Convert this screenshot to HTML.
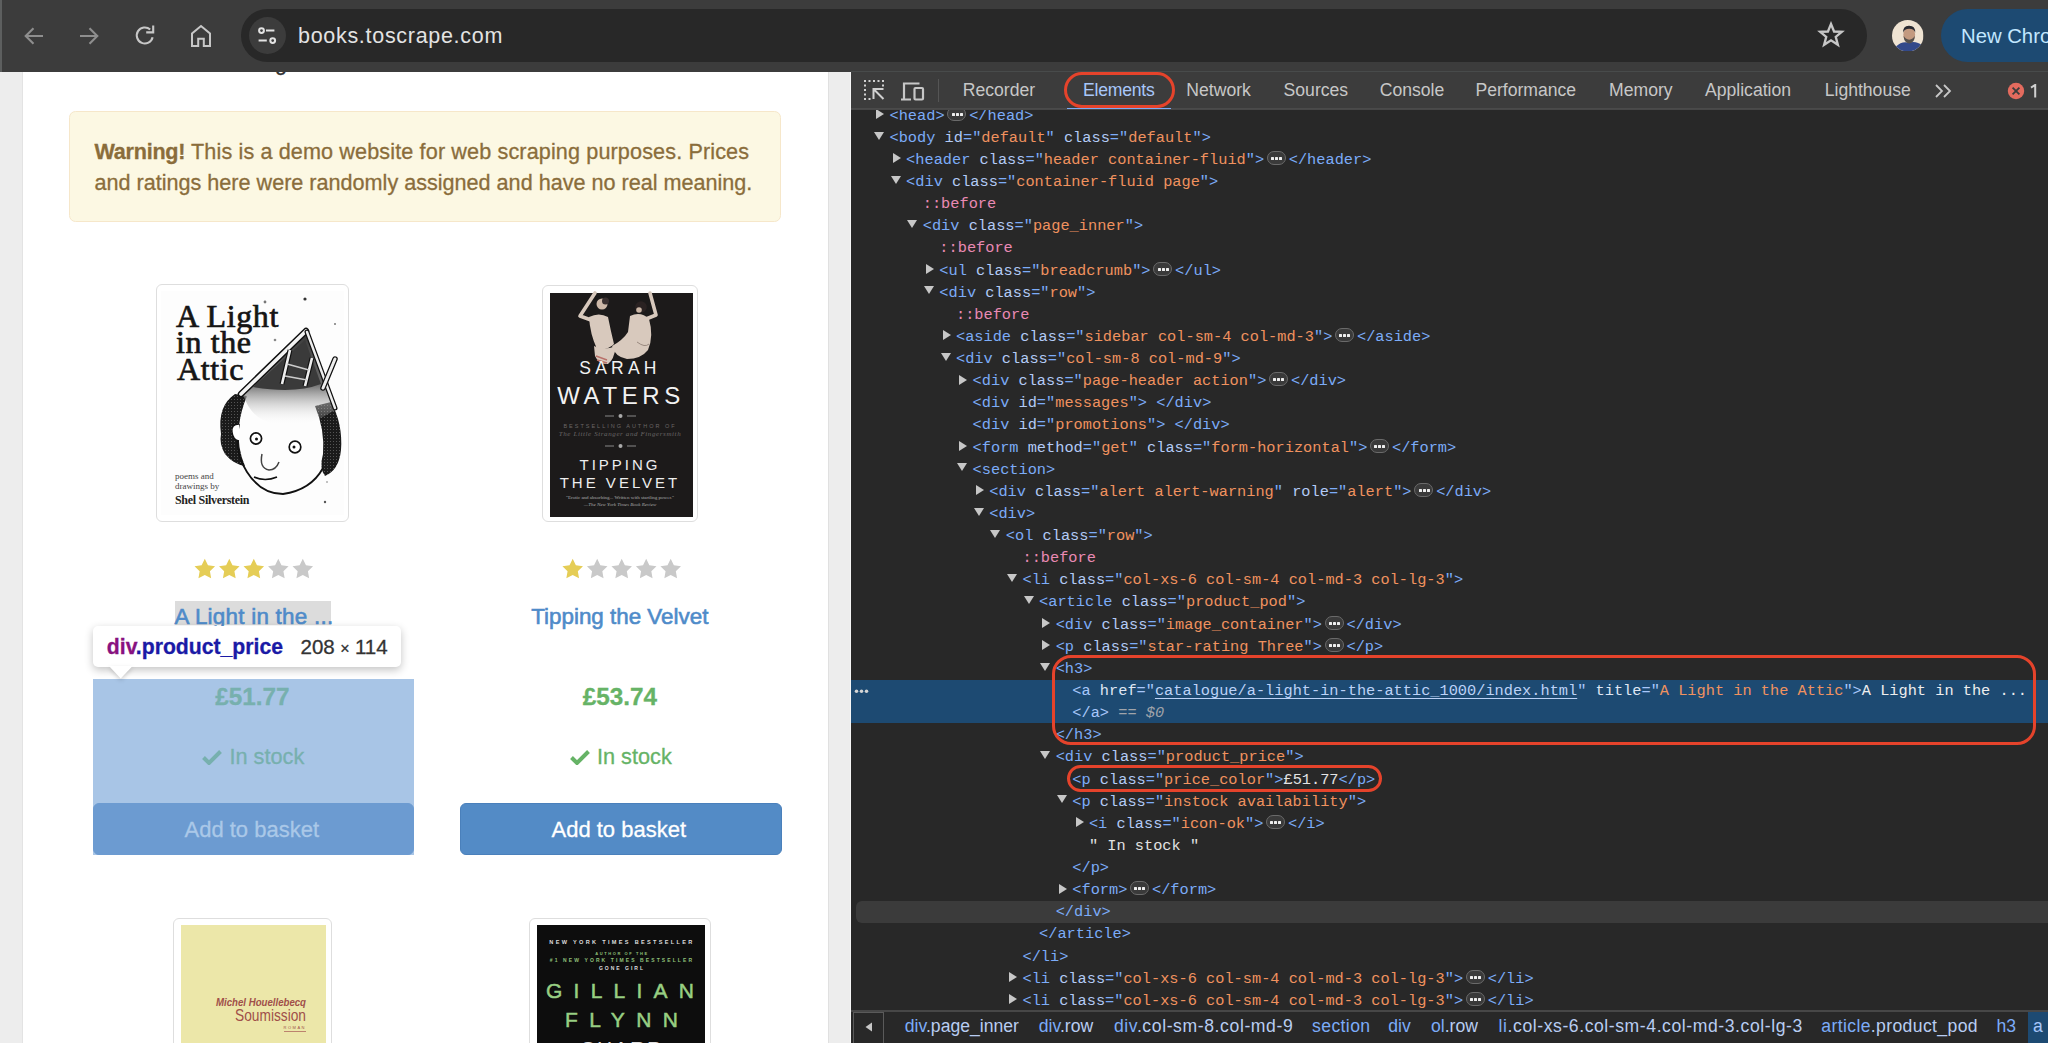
<!DOCTYPE html>
<html><head><meta charset="utf-8">
<style>
html,body{margin:0;padding:0}
body{width:2048px;height:1043px;overflow:hidden;position:relative;background:#3c3c3c;font-family:"Liberation Sans",sans-serif}
.abs{position:absolute}
/* browser toolbar */
#chrome{position:absolute;left:0;top:0;width:2048px;height:72px;background:#3c3c3c}
#pill{position:absolute;left:241px;top:9.3px;width:1626px;height:52.5px;border-radius:26.25px;background:#282828}
#url{position:absolute;left:298px;top:25.6px;font-size:21.5px;line-height:21.5px;letter-spacing:0.7px;color:#e3e3e3;white-space:nowrap}
#newchrome{position:absolute;left:1941px;top:9px;width:200px;height:53px;border-radius:26.5px;background:#1d4a72}
#newchrome span{position:absolute;left:20px;top:17px;font-size:20.3px;line-height:20px;color:#c2e7ff;white-space:nowrap}
/* page */
#page{position:absolute;left:0;top:72px;width:851px;height:971px;background:#ededed;overflow:hidden}
#white{position:absolute;left:23px;top:0;width:805px;height:971px;background:#fff}
.t{position:absolute;white-space:nowrap;line-height:1;-webkit-text-stroke:0.3px currentColor}
.alert{position:absolute;left:69.4px;top:39px;width:709.6px;height:109px;background:#fcf8e3;border:1px solid #f6e7ca;border-radius:6.5px}
.thumb{position:absolute;border:1.5px solid #dedede;border-radius:6px;background:#fff;overflow:hidden}
.btn{position:absolute;height:52px;border-radius:6px;background:#538bc6;border:1px solid #4a80bb;box-sizing:border-box}
/* devtools */
#dt{position:absolute;left:851px;top:71px;width:1197px;height:972px;background:#282828;overflow:hidden}
#dtbar{position:absolute;left:0;top:0;width:1197px;height:38px;background:#3c3c3c;border-top:1px solid #484b4b;box-sizing:border-box;border-bottom:1px solid #4a4a4a}
.tab{position:absolute;top:9.2px;font-size:17.6px;line-height:18px;white-space:nowrap}
#tree{position:absolute;left:0;top:38px;width:1197px;height:901px;overflow:hidden;background:#282828}
.row{position:absolute;white-space:pre;font-family:"Liberation Mono",monospace;font-size:15.3px;line-height:22.13px;height:22.13px}
.tro{position:absolute;width:0;height:0;border-left:5.6px solid transparent;border-right:5.6px solid transparent;border-top:8px solid #c7c7c7}
.trc{position:absolute;width:0;height:0;border-top:5.3px solid transparent;border-bottom:5.3px solid transparent;border-left:8px solid #c7c7c7}
.bd{display:inline-block;position:relative;width:19px;height:14px;box-sizing:border-box;border:1px solid #6a6a6a;border-radius:7px;background:#3a3a3a;margin:0 2.8px;vertical-align:-1px}
.bd i{position:absolute;top:5px;width:3px;height:3px;background:#eee;border-radius:0.5px}
.bd i:nth-child(1){left:3.2px}.bd i:nth-child(2){left:7.2px}.bd i:nth-child(3){left:11.2px}
#crumbbar{position:absolute;left:0;top:939px;width:1197px;height:33px;background:#282828;border-top:2px solid #474747;box-sizing:border-box}
.crumb{position:absolute;top:5.3px;font-size:17.6px;line-height:18px;white-space:nowrap}
.redpill{position:absolute;border:3px solid #e5432b;box-sizing:border-box}
</style></head>
<body>

<div id="chrome">
  <div class="abs" style="left:0;top:0;width:2px;height:72px;background:#5d5f5f"></div>
  <!-- back -->
  <svg class="abs" style="left:22px;top:24px" width="24" height="24" viewBox="0 0 24 24"><path d="M21 12H4.5M11.5 4.2L3.7 12l7.8 7.8" fill="none" stroke="#8e8e8e" stroke-width="2.1"/></svg>
  <!-- forward -->
  <svg class="abs" style="left:77px;top:24px" width="24" height="24" viewBox="0 0 24 24"><path d="M3 12h16.5M12.5 4.2l7.8 7.8-7.8 7.8" fill="none" stroke="#8e8e8e" stroke-width="2.1"/></svg>
  <!-- reload -->
  <svg class="abs" style="left:133px;top:24px" width="24" height="24" viewBox="0 0 24 24"><path d="M19.6 13.2A8 8 0 1 1 17.2 5.6" fill="none" stroke="#c7c7c7" stroke-width="2.1"/><path d="M13.2 8.4H20.2V1.6" fill="none" stroke="#c7c7c7" stroke-width="2.1"/></svg>
  <!-- home -->
  <svg class="abs" style="left:189px;top:23px" width="24" height="26" viewBox="0 0 24 26"><path d="M3 23V10.4L12 3l9 7.4V23h-6.2v-7.2H9.2V23z" fill="none" stroke="#c7c7c7" stroke-width="2"/></svg>
  <div id="pill"></div>
  <div class="abs" style="left:248.5px;top:17px;width:37px;height:37px;border-radius:50%;background:#3c3c3c"></div>
  <svg class="abs" style="left:255px;top:23px" width="25" height="25" viewBox="0 0 25 25"><circle cx="6.5" cy="7.6" r="2.4" fill="none" stroke="#e3e3e3" stroke-width="2"/><path d="M11 7.6h8.4M3.6 17.6h8.2" stroke="#e3e3e3" stroke-width="2"/><circle cx="17.7" cy="17.6" r="2.4" fill="none" stroke="#e3e3e3" stroke-width="2"/></svg>
  <div id="url">books.toscrape.com</div>
  <!-- star -->
  <svg class="abs" style="left:1816.5px;top:21px" width="28" height="27" viewBox="0 0 30 29"><polygon points="15,3.2 18.3,11.3 26.6,11.6 20.1,17 22.4,25.6 15,20.7 7.6,25.6 9.9,17 3.4,11.6 11.7,11.3" fill="none" stroke="#c7c7c7" stroke-width="2.5" stroke-linejoin="miter"/></svg>
  <!-- avatar -->
  <svg class="abs" style="left:1892px;top:19.5px" width="31.5" height="31.5" viewBox="0 0 32 32">
    <defs><clipPath id="av"><circle cx="16" cy="16" r="16"/></clipPath></defs>
    <g clip-path="url(#av)">
      <rect width="32" height="32" fill="#efe3d2"/>
      <path d="M2 32 L4 27 Q10 21 17 23 Q25 21 31 26 L32 32z" fill="#33498a"/>
      <ellipse cx="17.5" cy="15" rx="6" ry="7.6" fill="#c39a80"/>
      <path d="M11.3 13 Q11 5.5 17.5 5.8 Q24 6 23.6 13 Q22.5 9 17.5 9 Q12.5 9 11.3 13z" fill="#2a2a30"/>
      <path d="M11.8 16 Q12 23.5 17.5 23.8 Q23 23.5 23.2 16 Q21.5 19.5 17.5 20 Q13.5 19.5 11.8 16z" fill="#55504c"/>
    </g>
  </svg>
  <div id="newchrome"><span>New Chrome</span></div>
</div>

<div id="page">
  <div id="white"></div>
  <div class="abs" style="left:22px;top:0;width:1px;height:971px;background:#e3e3e3"></div>
  <div class="abs" style="left:828px;top:0;width:1px;height:971px;background:#e0e0e0"></div>
  <div class="abs" style="left:850px;top:0;width:1px;height:971px;background:#f6f6f6"></div>
  <div class="t" style="left:71px;top:-19.6px;font-size:21.6px;color:#333"><b>1000</b> results - showing <b>1</b> to <b>20</b>.</div>

  <div class="alert"></div>
  <div class="t" style="left:94.5px;top:69.2px;font-size:21.6px;color:#8a6d3b"><b style="letter-spacing:-0.25px">Warning!</b><span style="letter-spacing:0.13px"> This is a demo website for web scraping purposes. Prices</span></div>
  <div class="t" style="left:94.5px;top:100.3px;font-size:21.6px;color:#8a6d3b">and ratings here were randomly assigned and have no real meaning.</div>

  <!-- product 1 -->
  <div class="thumb" style="left:155.5px;top:212.3px;width:191.5px;height:236px">
    <svg width="195" height="238" viewBox="0 0 195 238" style="position:absolute;left:-1.5px;top:-1.5px">
      <rect x="6" y="7" width="183" height="224" fill="#fdfdfd"/>
      <text x="21" y="42.5" font-family="Liberation Serif" font-size="32" fill="#151515" stroke="#151515" stroke-width="0.7" letter-spacing="0.6">A Light</text>
      <text x="21" y="69" font-family="Liberation Serif" font-size="32" fill="#151515" stroke="#151515" stroke-width="0.7" letter-spacing="0.6">in the</text>
      <text x="22" y="95.5" font-family="Liberation Serif" font-size="32" fill="#151515" stroke="#151515" stroke-width="0.7" letter-spacing="0.6">Attic</text>
      <text x="20" y="195" font-family="Liberation Serif" font-size="9" fill="#444">poems and</text>
      <text x="20" y="204.5" font-family="Liberation Serif" font-size="9" fill="#444">drawings by</text>
      <text x="20" y="220" font-family="Liberation Serif" font-size="12" font-weight="bold" fill="#222" letter-spacing="-0.3">Shel Silverstein</text>
      <!-- head -->
      <defs>
        <linearGradient id="hatch" x1="0" y1="0" x2="0" y2="1"><stop offset="0" stop-color="#3a3a3a"/><stop offset="0.55" stop-color="#6a6a6a"/><stop offset="1" stop-color="#fff" stop-opacity="0"/></linearGradient>
        <pattern id="hair" width="3" height="3" patternUnits="userSpaceOnUse"><rect width="3" height="3" fill="#1a1a1a"/><rect x="1" y="1" width="1" height="1" fill="#555"/></pattern>
      </defs>
      <!-- hair -->
      <path d="M66 150 Q62 122 80 110 L92 112 Q86 126 84 142 Q82 164 90 182 Q78 180 70 170 Q64 160 66 150z" fill="url(#hair)"/>
      <path d="M160 122 L176 118 Q188 140 186 166 Q184 186 170 192 Q164 184 168 170 Q170 146 160 122z" fill="url(#hair)"/>
      <!-- roof interior + head top hatch -->
      <path d="M88 110 L152 49 L180 126 Q150 146 120 140 Q96 136 88 110z" fill="url(#hatch)"/>
      <path d="M98 103 L150 56 L166 100 Q140 110 98 103z" fill="#3a3a3a"/>
      <!-- face -->
      <path d="M84 140 Q78 166 92 188 Q106 210 128 210 Q156 206 168 184" fill="none" stroke="#111" stroke-width="1.8"/>
      <path d="M84 140 Q76 140 77 148 Q78 156 84 157" fill="#fff" stroke="#111" stroke-width="1.4"/>
      <!-- planks -->
      <path d="M86 110 L151 47" stroke="#111" stroke-width="6.5" stroke-linecap="round"/>
      <path d="M86 110 L151 47" stroke="#f4f4f4" stroke-width="3.6" stroke-linecap="round"/>
      <path d="M152 48 L180 124" stroke="#111" stroke-width="5" stroke-linecap="round"/>
      <path d="M152 48 L180 124" stroke="#eee" stroke-width="2.4" stroke-linecap="round"/>
      <path d="M180 75 L168 104" stroke="#111" stroke-width="5.5" stroke-linecap="round"/>
      <path d="M180 75 L168 104" stroke="#eee" stroke-width="3" stroke-linecap="round"/>
      <!-- ladder -->
      <path d="M135 66 L127 100 M157 74 L150 102" stroke="#111" stroke-width="5"/>
      <path d="M135 66 L127 100 M157 74 L150 102" stroke="#eee" stroke-width="2.6"/>
      <path d="M132 80 L154 86 M130 92 L152 96" stroke="#ccc" stroke-width="1.6"/>
      <!-- eyes -->
      <circle cx="101" cy="154.5" r="5.6" fill="#fff" stroke="#111" stroke-width="1.7"/><circle cx="101.5" cy="155" r="1.5" fill="#111"/>
      <circle cx="140" cy="163" r="5.8" fill="#fff" stroke="#111" stroke-width="1.7"/><circle cx="139" cy="163" r="1.5" fill="#111"/>
      <path d="M107 170 Q104 184 114 186 Q121 186 124 178" fill="none" stroke="#444" stroke-width="1.5"/>
      <path d="M99 193 Q110 198 122 193" fill="none" stroke="#111" stroke-width="1.7"/>
      <circle cx="110" cy="18" r="1.4" fill="#777"/><circle cx="150" cy="15" r="1.6" fill="#333"/><circle cx="120" cy="56" r="1.3" fill="#888"/><circle cx="180" cy="40" r="1" fill="#777"/><circle cx="170" cy="218" r="1.2" fill="#555"/><circle cx="172" cy="198" r="0.8" fill="#777"/>
    </svg>
  </div>
  <svg class="abs" style="left:0;top:-72px" width="851" height="1043"><polygon points="204.80,558.80 207.97,565.23 215.07,566.26 209.94,571.27 211.15,578.34 204.80,575.00 198.45,578.34 199.66,571.27 194.53,566.26 201.63,565.23" fill="#e5cd56"/><polygon points="229.30,558.80 232.47,565.23 239.57,566.26 234.44,571.27 235.65,578.34 229.30,575.00 222.95,578.34 224.16,571.27 219.03,566.26 226.13,565.23" fill="#e5cd56"/><polygon points="253.80,558.80 256.97,565.23 264.07,566.26 258.94,571.27 260.15,578.34 253.80,575.00 247.45,578.34 248.66,571.27 243.53,566.26 250.63,565.23" fill="#e5cd56"/><polygon points="278.30,558.80 281.47,565.23 288.57,566.26 283.44,571.27 284.65,578.34 278.30,575.00 271.95,578.34 273.16,571.27 268.03,566.26 275.13,565.23" fill="#c9c9c9"/><polygon points="302.80,558.80 305.97,565.23 313.07,566.26 307.94,571.27 309.15,578.34 302.80,575.00 296.45,578.34 297.66,571.27 292.53,566.26 299.63,565.23" fill="#c9c9c9"/><polygon points="572.70,558.80 575.87,565.23 582.97,566.26 577.84,571.27 579.05,578.34 572.70,575.00 566.35,578.34 567.56,571.27 562.43,566.26 569.53,565.23" fill="#e5cd56"/><polygon points="597.20,558.80 600.37,565.23 607.47,566.26 602.34,571.27 603.55,578.34 597.20,575.00 590.85,578.34 592.06,571.27 586.93,566.26 594.03,565.23" fill="#c9c9c9"/><polygon points="621.70,558.80 624.87,565.23 631.97,566.26 626.84,571.27 628.05,578.34 621.70,575.00 615.35,578.34 616.56,571.27 611.43,566.26 618.53,565.23" fill="#c9c9c9"/><polygon points="646.20,558.80 649.37,565.23 656.47,566.26 651.34,571.27 652.55,578.34 646.20,575.00 639.85,578.34 641.06,571.27 635.93,566.26 643.03,565.23" fill="#c9c9c9"/><polygon points="670.70,558.80 673.87,565.23 680.97,566.26 675.84,571.27 677.05,578.34 670.70,575.00 664.35,578.34 665.56,571.27 660.43,566.26 667.53,565.23" fill="#c9c9c9"/></svg>
  <div class="abs" style="left:175px;top:529px;width:156px;height:24px;background:#dcdcdc"></div>
  <div class="t" style="left:174.5px;top:534.1px;font-size:22.4px;letter-spacing:0.25px;color:#4f8bc9;-webkit-text-stroke:0.6px #4f8bc9">A Light in the ...</div>

  <!-- product 1 price area (highlighted) -->
  <div class="abs" style="left:93px;top:607.2px;width:321px;height:176px;background:#a8c5e6"></div>
  <div class="t" style="left:215.2px;top:612.5px;font-size:24.3px;font-weight:bold;color:#77b0ae">£51.77</div>
  <svg class="abs" style="left:202px;top:677.5px" width="20" height="15" viewBox="0 0 20 15"><path d="M1.5 7.5 L7 13 L18.5 1.5" fill="none" stroke="#77b0ae" stroke-width="4"/></svg>
  <div class="t" style="left:229.5px;top:673.8px;font-size:21.7px;color:#77b0ae">In stock</div>
  <div class="btn" style="left:93px;top:731px;width:321px;background:#6c9bd1;border-color:#6c9bd1"></div>
  <div class="t" style="left:184.5px;top:746.8px;font-size:22px;color:#aac8e8">Add to basket</div>

  <!-- tooltip -->
  <div class="abs" style="left:93px;top:553.5px;width:308px;height:41.5px;background:#fff;border-radius:5px;box-shadow:0 3px 8px rgba(0,0,0,.24)"></div>
  <svg class="abs" style="left:104px;top:594px;overflow:visible;filter:drop-shadow(0 2px 2px rgba(0,0,0,.18))" width="34" height="14"><path d="M5 0 L16.7 12.6 L28.6 0z" fill="#fff"/></svg>
  <div class="t" style="left:106.8px;top:563.5px;font-size:21.2px;font-weight:bold"><span style="color:#881280">div</span><span style="color:#1a1aa6">.product_price</span></div>
  <div class="t" style="left:300.5px;top:564.5px;font-size:20.5px;color:#333">208<span style="font-size:16px;margin:0 1px"> × </span>114</div>

  <!-- product 2 -->
  <div class="thumb" style="left:541.5px;top:212.8px;width:154.5px;height:235.5px">
    <svg width="158" height="238" viewBox="0 0 158 238" style="position:absolute;left:-1.5px;top:-1.5px">
      <rect x="9" y="9" width="143" height="224" fill="#1c1a1a"/>
      <g fill="#d8c9bd" stroke="#d8c9bd">
        <polyline points="54,9 39,32 50,36" fill="none" stroke-width="3.6" stroke-linecap="round" stroke-linejoin="round"/>
        <polyline points="109,9 115,31 105,35" fill="none" stroke-width="3.6" stroke-linecap="round" stroke-linejoin="round"/>
        <path stroke="none" d="M48 33 Q58 28 67 33 Q70 48 73 60 Q66 67 56 65 Q49 50 48 33z"/>
        <path stroke="none" d="M53 62 Q62 67 75 62 Q73 76 67 80 Q58 81 54 72z"/>
        <path stroke="none" d="M89 32 Q100 27 108 35 Q113 52 107 66 Q100 75 86 75 Q74 73 71 62 Q82 56 87 48 Q88 40 89 32z"/>
      </g>
      <circle cx="61" cy="20" r="5.5" fill="#cdb8a8"/><circle cx="64.5" cy="17" r="3.5" fill="#3a3030"/>
      <circle cx="100" cy="23" r="5.8" fill="#2a2222"/><circle cx="98" cy="26" r="2.8" fill="#c9b4a4"/>
      <path d="M55 72 L66 76 M56 76 L66 79" stroke="#b9716a" stroke-width="1.4"/>
      <path d="M96 58 Q104 64 108 60" stroke="#9a8a80" stroke-width="1" fill="none"/>
      <text x="79" y="90" text-anchor="middle" font-family="Liberation Sans" font-size="17.5" fill="#f2f2f2" letter-spacing="4.2">SARAH</text>
      <text x="80" y="120" text-anchor="middle" font-family="Liberation Sans" font-size="24" fill="#f2f2f2" letter-spacing="4.6">WATERS</text>
      <path d="M64 132h9M86 132h9" stroke="#888" stroke-width="1"/><circle cx="79.5" cy="132" r="2" fill="#aaa"/>
      <text x="79" y="144" text-anchor="middle" font-family="Liberation Sans" font-size="5.5" fill="#6a6666" letter-spacing="2">BESTSELLING AUTHOR OF</text>
      <text x="79" y="152" text-anchor="middle" font-family="Liberation Serif" font-style="italic" font-size="7" fill="#6a6666" letter-spacing="0.6">The Little Stranger and Fingersmith</text>
      <path d="M64 162h9M86 162h9" stroke="#888" stroke-width="1"/><circle cx="79.5" cy="162" r="2" fill="#aaa"/>
      <text x="79" y="186" text-anchor="middle" font-family="Liberation Sans" font-size="15" fill="#eeeeee" letter-spacing="3">TIPPING</text>
      <text x="79" y="204" text-anchor="middle" font-family="Liberation Sans" font-size="15" fill="#eeeeee" letter-spacing="3">THE VELVET</text>
      <text x="79" y="215" text-anchor="middle" font-family="Liberation Serif" font-size="5" fill="#aaa">"Erotic and absorbing... Written with startling power."</text>
      <text x="79" y="222" text-anchor="middle" font-family="Liberation Serif" font-style="italic" font-size="5" fill="#aaa">—The New York Times Book Review</text>
    </svg>
  </div>
  <div class="t" style="left:531.2px;top:534.4px;font-size:22.4px;color:#4f8bc9;-webkit-text-stroke:0.6px #4f8bc9">Tipping the Velvet</div>
  <div class="t" style="left:582.8px;top:613px;font-size:24.3px;font-weight:bold;color:#66b366">£53.74</div>
  <svg class="abs" style="left:569.5px;top:677.5px" width="20" height="15" viewBox="0 0 20 15"><path d="M1.5 7.5 L7 13 L18.5 1.5" fill="none" stroke="#66b366" stroke-width="4"/></svg>
  <div class="t" style="left:597px;top:673.8px;font-size:21.7px;color:#66b366">In stock</div>
  <div class="btn" style="left:460px;top:731px;width:322px"></div>
  <div class="t" style="left:551.5px;top:746.8px;font-size:22px;color:#fff">Add to basket</div>

  <!-- row 2 -->
  <div class="thumb" style="left:173.3px;top:845.5px;width:156.5px;height:200px">
    <div class="abs" style="left:6.5px;top:6px;width:145px;height:200px;background:#ece7a9"></div>
    <svg class="abs" style="left:0;top:0" width="160" height="140">
      <text x="132" y="87" text-anchor="end" font-family="Liberation Sans" font-style="italic" font-weight="bold" font-size="10.5" fill="#a0504a" textLength="90" lengthAdjust="spacingAndGlyphs">Michel Houellebecq</text>
      <text x="132" y="101.8" text-anchor="end" font-family="Liberation Sans" font-size="16.5" fill="#a0504a" textLength="71" lengthAdjust="spacingAndGlyphs">Soumission</text>
      <text x="132" y="110" text-anchor="end" font-family="Liberation Sans" font-size="4" fill="#a0504a" letter-spacing="1.5">ROMAN</text>
      <path d="M110 112.5h22" stroke="#b06a60" stroke-width="0.8"/>
    </svg>
  </div>
  <div class="thumb" style="left:529.3px;top:845.5px;width:180px;height:200px">
    <div class="abs" style="left:6.5px;top:6px;width:168px;height:200px;background:#0d0d0d"></div>
    <svg class="abs" style="left:0;top:0" width="183" height="160">
      <text x="92" y="25" text-anchor="middle" font-family="Liberation Sans" font-weight="bold" font-size="5.6" fill="#ddd" letter-spacing="2.3">NEW YORK TIMES BESTSELLER</text>
      <text x="92" y="36" text-anchor="middle" font-family="Liberation Sans" font-weight="bold" font-size="4" fill="#8fc07a" letter-spacing="1.6">AUTHOR OF THE</text>
      <text x="92" y="42.5" text-anchor="middle" font-family="Liberation Sans" font-weight="bold" font-size="5" fill="#8fc07a" letter-spacing="2.1">#1 NEW YORK TIMES BESTSELLER</text>
      <text x="92" y="50.5" text-anchor="middle" font-family="Liberation Sans" font-weight="bold" font-size="5" fill="#ddd" letter-spacing="2">GONE GIRL</text>
      <text x="16" y="78.6" font-family="Liberation Sans" font-size="21" fill="#98cf83" stroke="#98cf83" stroke-width="0.5" textLength="148" lengthAdjust="spacing">GILLIAN</text>
      <text x="35" y="108.3" font-family="Liberation Sans" font-size="21" fill="#98cf83" stroke="#98cf83" stroke-width="0.5" textLength="113" lengthAdjust="spacing">FLYNN</text>
      <text x="51" y="136.8" font-family="Liberation Sans" font-size="21" fill="#e0e0e0" textLength="80" lengthAdjust="spacing">SHARP</text>
    </svg>
  </div>
</div>

<div id="dt">
  <div id="dtbar">
    <svg class="abs" style="left:12px;top:7px" width="22" height="22" viewBox="0 0 22 22">
      <g fill="#d0d0d0"><rect x="1" y="1" width="2" height="2"/><rect x="5.5" y="1" width="2" height="2"/><rect x="10" y="1" width="2" height="2"/><rect x="14.5" y="1" width="2" height="2"/><rect x="19" y="1" width="2" height="2"/>
      <rect x="1" y="5.5" width="2" height="2"/><rect x="19" y="5.5" width="2" height="2"/><rect x="1" y="10" width="2" height="2"/><rect x="1" y="14.5" width="2" height="2"/><rect x="1" y="19" width="2" height="2"/><rect x="5.5" y="19" width="2" height="2"/></g>
      <path d="M10.5 20V10h10M11 10.5 L20.5 20" fill="none" stroke="#d0d0d0" stroke-width="2"/>
    </svg>
    <svg class="abs" style="left:49px;top:9px" width="26" height="20" viewBox="0 0 26 20"><path d="M4 18V2.5h15.5M1 18.5h10" fill="none" stroke="#c7c7c7" stroke-width="2.2"/><rect x="14.5" y="7" width="8.5" height="11.5" rx="1" fill="none" stroke="#c7c7c7" stroke-width="2.2"/></svg>
    <div class="abs" style="left:87px;top:7px;width:1px;height:23px;background:#555"></div>
    <div class="tab" style="left:111.8px;color:#c7c7c7">Recorder</div>
<div class="tab" style="left:231.9px;color:#a8c7fa;letter-spacing:-0.2px">Elements</div>
<div class="tab" style="left:335.3px;color:#c7c7c7">Network</div>
<div class="tab" style="left:432.6px;color:#c7c7c7">Sources</div>
<div class="tab" style="left:528.7px;color:#c7c7c7">Console</div>
<div class="tab" style="left:624.4px;color:#c7c7c7">Performance</div>
<div class="tab" style="left:758.1px;color:#c7c7c7">Memory</div>
<div class="tab" style="left:854.0px;color:#c7c7c7">Application</div>
<div class="tab" style="left:973.7px;color:#c7c7c7">Lighthouse</div>
    <div class="abs" style="left:215.7px;top:35.9px;width:104.8px;height:2px;background:#7cacf8"></div>
    <svg class="abs" style="left:1082.5px;top:10.5px" width="20" height="16" viewBox="0 0 20 16"><path d="M2 2l6 6-6 6M10 2l6 6-6 6" fill="none" stroke="#c7c7c7" stroke-width="1.8"/></svg>
    <svg class="abs" style="left:1156px;top:9.6px" width="18" height="18" viewBox="0 0 18 18"><circle cx="9" cy="9" r="8.2" fill="#e46b5e"/><path d="M5.6 5.6l6.8 6.8M12.4 5.6l-6.8 6.8" stroke="#3c3c3c" stroke-width="1.8"/></svg>
    <svg class="abs" style="left:1178px;top:12px" width="10" height="15" viewBox="0 0 10 15"><path d="M2 3.6 L6.2 0.9 V13.5" fill="none" stroke="#d0d0d0" stroke-width="2"/></svg>
  </div>
  <div id="tree">
<div class="trc" style="left:25.20px;top:0.10px"></div>
<div class="row" style="left:38.50px;top:-4.40px"><span style="color:#7cacf8">&lt;head</span><span style="color:#7cacf8">&gt;</span><span class="bd"><i></i><i></i><i></i></span><span style="color:#7cacf8">&lt;/head</span><span style="color:#7cacf8">&gt;</span></div>
<div class="tro" style="left:23.10px;top:22.53px"></div>
<div class="row" style="left:38.50px;top:17.73px"><span style="color:#7cacf8">&lt;body</span><span style="color:#b3cbf6"> id</span><span style="color:#7cacf8">=&quot;</span><span style="color:#f0925f">default</span><span style="color:#7cacf8">&quot;</span><span style="color:#b3cbf6"> class</span><span style="color:#7cacf8">=&quot;</span><span style="color:#f0925f">default</span><span style="color:#7cacf8">&quot;</span><span style="color:#7cacf8">&gt;</span></div>
<div class="trc" style="left:41.82px;top:44.36px"></div>
<div class="row" style="left:55.12px;top:39.86px"><span style="color:#7cacf8">&lt;header</span><span style="color:#b3cbf6"> class</span><span style="color:#7cacf8">=&quot;</span><span style="color:#f0925f">header container-fluid</span><span style="color:#7cacf8">&quot;</span><span style="color:#7cacf8">&gt;</span><span class="bd"><i></i><i></i><i></i></span><span style="color:#7cacf8">&lt;/header</span><span style="color:#7cacf8">&gt;</span></div>
<div class="tro" style="left:39.72px;top:66.79px"></div>
<div class="row" style="left:55.12px;top:61.99px"><span style="color:#7cacf8">&lt;div</span><span style="color:#b3cbf6"> class</span><span style="color:#7cacf8">=&quot;</span><span style="color:#f0925f">container-fluid page</span><span style="color:#7cacf8">&quot;</span><span style="color:#7cacf8">&gt;</span></div>
<div class="row" style="left:71.74px;top:84.12px"><span style="color:#ea8ab4">::before</span></div>
<div class="tro" style="left:56.34px;top:111.05px"></div>
<div class="row" style="left:71.74px;top:106.25px"><span style="color:#7cacf8">&lt;div</span><span style="color:#b3cbf6"> class</span><span style="color:#7cacf8">=&quot;</span><span style="color:#f0925f">page_inner</span><span style="color:#7cacf8">&quot;</span><span style="color:#7cacf8">&gt;</span></div>
<div class="row" style="left:88.36px;top:128.38px"><span style="color:#ea8ab4">::before</span></div>
<div class="trc" style="left:75.06px;top:155.01px"></div>
<div class="row" style="left:88.36px;top:150.51px"><span style="color:#7cacf8">&lt;ul</span><span style="color:#b3cbf6"> class</span><span style="color:#7cacf8">=&quot;</span><span style="color:#f0925f">breadcrumb</span><span style="color:#7cacf8">&quot;</span><span style="color:#7cacf8">&gt;</span><span class="bd"><i></i><i></i><i></i></span><span style="color:#7cacf8">&lt;/ul</span><span style="color:#7cacf8">&gt;</span></div>
<div class="tro" style="left:72.96px;top:177.44px"></div>
<div class="row" style="left:88.36px;top:172.64px"><span style="color:#7cacf8">&lt;div</span><span style="color:#b3cbf6"> class</span><span style="color:#7cacf8">=&quot;</span><span style="color:#f0925f">row</span><span style="color:#7cacf8">&quot;</span><span style="color:#7cacf8">&gt;</span></div>
<div class="row" style="left:104.98px;top:194.77px"><span style="color:#ea8ab4">::before</span></div>
<div class="trc" style="left:91.68px;top:221.40px"></div>
<div class="row" style="left:104.98px;top:216.90px"><span style="color:#7cacf8">&lt;aside</span><span style="color:#b3cbf6"> class</span><span style="color:#7cacf8">=&quot;</span><span style="color:#f0925f">sidebar col-sm-4 col-md-3</span><span style="color:#7cacf8">&quot;</span><span style="color:#7cacf8">&gt;</span><span class="bd"><i></i><i></i><i></i></span><span style="color:#7cacf8">&lt;/aside</span><span style="color:#7cacf8">&gt;</span></div>
<div class="tro" style="left:89.58px;top:243.83px"></div>
<div class="row" style="left:104.98px;top:239.03px"><span style="color:#7cacf8">&lt;div</span><span style="color:#b3cbf6"> class</span><span style="color:#7cacf8">=&quot;</span><span style="color:#f0925f">col-sm-8 col-md-9</span><span style="color:#7cacf8">&quot;</span><span style="color:#7cacf8">&gt;</span></div>
<div class="trc" style="left:108.30px;top:265.66px"></div>
<div class="row" style="left:121.60px;top:261.16px"><span style="color:#7cacf8">&lt;div</span><span style="color:#b3cbf6"> class</span><span style="color:#7cacf8">=&quot;</span><span style="color:#f0925f">page-header action</span><span style="color:#7cacf8">&quot;</span><span style="color:#7cacf8">&gt;</span><span class="bd"><i></i><i></i><i></i></span><span style="color:#7cacf8">&lt;/div</span><span style="color:#7cacf8">&gt;</span></div>
<div class="row" style="left:121.60px;top:283.29px"><span style="color:#7cacf8">&lt;div</span><span style="color:#b3cbf6"> id</span><span style="color:#7cacf8">=&quot;</span><span style="color:#f0925f">messages</span><span style="color:#7cacf8">&quot;</span><span style="color:#7cacf8">&gt;</span><span style="color:#e3e3e3"> </span><span style="color:#7cacf8">&lt;/div</span><span style="color:#7cacf8">&gt;</span></div>
<div class="row" style="left:121.60px;top:305.42px"><span style="color:#7cacf8">&lt;div</span><span style="color:#b3cbf6"> id</span><span style="color:#7cacf8">=&quot;</span><span style="color:#f0925f">promotions</span><span style="color:#7cacf8">&quot;</span><span style="color:#7cacf8">&gt;</span><span style="color:#e3e3e3"> </span><span style="color:#7cacf8">&lt;/div</span><span style="color:#7cacf8">&gt;</span></div>
<div class="trc" style="left:108.30px;top:332.05px"></div>
<div class="row" style="left:121.60px;top:327.55px"><span style="color:#7cacf8">&lt;form</span><span style="color:#b3cbf6"> method</span><span style="color:#7cacf8">=&quot;</span><span style="color:#f0925f">get</span><span style="color:#7cacf8">&quot;</span><span style="color:#b3cbf6"> class</span><span style="color:#7cacf8">=&quot;</span><span style="color:#f0925f">form-horizontal</span><span style="color:#7cacf8">&quot;</span><span style="color:#7cacf8">&gt;</span><span class="bd"><i></i><i></i><i></i></span><span style="color:#7cacf8">&lt;/form</span><span style="color:#7cacf8">&gt;</span></div>
<div class="tro" style="left:106.20px;top:354.48px"></div>
<div class="row" style="left:121.60px;top:349.68px"><span style="color:#7cacf8">&lt;section</span><span style="color:#7cacf8">&gt;</span></div>
<div class="trc" style="left:124.92px;top:376.31px"></div>
<div class="row" style="left:138.22px;top:371.81px"><span style="color:#7cacf8">&lt;div</span><span style="color:#b3cbf6"> class</span><span style="color:#7cacf8">=&quot;</span><span style="color:#f0925f">alert alert-warning</span><span style="color:#7cacf8">&quot;</span><span style="color:#b3cbf6"> role</span><span style="color:#7cacf8">=&quot;</span><span style="color:#f0925f">alert</span><span style="color:#7cacf8">&quot;</span><span style="color:#7cacf8">&gt;</span><span class="bd"><i></i><i></i><i></i></span><span style="color:#7cacf8">&lt;/div</span><span style="color:#7cacf8">&gt;</span></div>
<div class="tro" style="left:122.82px;top:398.74px"></div>
<div class="row" style="left:138.22px;top:393.94px"><span style="color:#7cacf8">&lt;div</span><span style="color:#7cacf8">&gt;</span></div>
<div class="tro" style="left:139.44px;top:420.87px"></div>
<div class="row" style="left:154.84px;top:416.07px"><span style="color:#7cacf8">&lt;ol</span><span style="color:#b3cbf6"> class</span><span style="color:#7cacf8">=&quot;</span><span style="color:#f0925f">row</span><span style="color:#7cacf8">&quot;</span><span style="color:#7cacf8">&gt;</span></div>
<div class="row" style="left:171.46px;top:438.20px"><span style="color:#ea8ab4">::before</span></div>
<div class="tro" style="left:156.06px;top:465.13px"></div>
<div class="row" style="left:171.46px;top:460.33px"><span style="color:#7cacf8">&lt;li</span><span style="color:#b3cbf6"> class</span><span style="color:#7cacf8">=&quot;</span><span style="color:#f0925f">col-xs-6 col-sm-4 col-md-3 col-lg-3</span><span style="color:#7cacf8">&quot;</span><span style="color:#7cacf8">&gt;</span></div>
<div class="tro" style="left:172.68px;top:487.26px"></div>
<div class="row" style="left:188.08px;top:482.46px"><span style="color:#7cacf8">&lt;article</span><span style="color:#b3cbf6"> class</span><span style="color:#7cacf8">=&quot;</span><span style="color:#f0925f">product_pod</span><span style="color:#7cacf8">&quot;</span><span style="color:#7cacf8">&gt;</span></div>
<div class="trc" style="left:191.40px;top:509.09px"></div>
<div class="row" style="left:204.70px;top:504.59px"><span style="color:#7cacf8">&lt;div</span><span style="color:#b3cbf6"> class</span><span style="color:#7cacf8">=&quot;</span><span style="color:#f0925f">image_container</span><span style="color:#7cacf8">&quot;</span><span style="color:#7cacf8">&gt;</span><span class="bd"><i></i><i></i><i></i></span><span style="color:#7cacf8">&lt;/div</span><span style="color:#7cacf8">&gt;</span></div>
<div class="trc" style="left:191.40px;top:531.22px"></div>
<div class="row" style="left:204.70px;top:526.72px"><span style="color:#7cacf8">&lt;p</span><span style="color:#b3cbf6"> class</span><span style="color:#7cacf8">=&quot;</span><span style="color:#f0925f">star-rating Three</span><span style="color:#7cacf8">&quot;</span><span style="color:#7cacf8">&gt;</span><span class="bd"><i></i><i></i><i></i></span><span style="color:#7cacf8">&lt;/p</span><span style="color:#7cacf8">&gt;</span></div>
<div class="tro" style="left:189.30px;top:553.65px"></div>
<div class="row" style="left:204.70px;top:548.85px"><span style="color:#7cacf8">&lt;h3</span><span style="color:#7cacf8">&gt;</span></div>
<div style="position:absolute;left:0;top:570.98px;width:1197px;height:43.1px;background:#1d4a72"></div>
<div class="row" style="left:221.32px;top:570.98px"><span style="color:#a8c7fa">&lt;a</span><span style="color:#dfe6f3"> href</span><span style="color:#a8c7fa">="</span><span style="color:#bcd2f7;text-decoration:underline;text-underline-offset:3px">catalogue/a-light-in-the-attic_1000/index.html</span><span style="color:#a8c7fa">"</span><span style="color:#dfe6f3"> title</span><span style="color:#a8c7fa">="</span><span style="color:#f0925f">A Light in the Attic</span><span style="color:#a8c7fa">"&gt;</span><span style="color:#eeeeee">A Light in the ...</span></div>
<svg style="position:absolute;left:0;top:570.98px" width="24" height="22"><g fill="#d6d6d6"><circle cx="5.5" cy="11.32" r="1.75"/><circle cx="10.5" cy="11.32" r="1.75"/><circle cx="15.5" cy="11.32" r="1.75"/></g></svg>
<div class="row" style="left:221.32px;top:593.11px"><span style="color:#a8c7fa">&lt;/a&gt;</span><span style="color:#a0a4aa"> == </span><span style="color:#a0a4aa;font-style:italic">$0</span></div>
<div class="row" style="left:204.70px;top:615.24px"><span style="color:#7cacf8">&lt;/h3</span><span style="color:#7cacf8">&gt;</span></div>
<div class="tro" style="left:189.30px;top:642.17px"></div>
<div class="row" style="left:204.70px;top:637.37px"><span style="color:#7cacf8">&lt;div</span><span style="color:#b3cbf6"> class</span><span style="color:#7cacf8">=&quot;</span><span style="color:#f0925f">product_price</span><span style="color:#7cacf8">&quot;</span><span style="color:#7cacf8">&gt;</span></div>
<div class="row" style="left:221.32px;top:659.50px"><span style="color:#7cacf8">&lt;p</span><span style="color:#b3cbf6"> class</span><span style="color:#7cacf8">=&quot;</span><span style="color:#f0925f">price_color</span><span style="color:#7cacf8">&quot;</span><span style="color:#7cacf8">&gt;</span><span style="color:#e3e3e3">£51.77</span><span style="color:#7cacf8">&lt;/p</span><span style="color:#7cacf8">&gt;</span></div>
<div class="tro" style="left:205.92px;top:686.43px"></div>
<div class="row" style="left:221.32px;top:681.63px"><span style="color:#7cacf8">&lt;p</span><span style="color:#b3cbf6"> class</span><span style="color:#7cacf8">=&quot;</span><span style="color:#f0925f">instock availability</span><span style="color:#7cacf8">&quot;</span><span style="color:#7cacf8">&gt;</span></div>
<div class="trc" style="left:224.64px;top:708.26px"></div>
<div class="row" style="left:237.94px;top:703.76px"><span style="color:#7cacf8">&lt;i</span><span style="color:#b3cbf6"> class</span><span style="color:#7cacf8">=&quot;</span><span style="color:#f0925f">icon-ok</span><span style="color:#7cacf8">&quot;</span><span style="color:#7cacf8">&gt;</span><span class="bd"><i></i><i></i><i></i></span><span style="color:#7cacf8">&lt;/i</span><span style="color:#7cacf8">&gt;</span></div>
<div class="row" style="left:237.94px;top:725.89px"><span style="color:#e3e3e3">&quot; In stock &quot;</span></div>
<div class="row" style="left:221.32px;top:748.02px"><span style="color:#7cacf8">&lt;/p</span><span style="color:#7cacf8">&gt;</span></div>
<div class="trc" style="left:208.02px;top:774.65px"></div>
<div class="row" style="left:221.32px;top:770.15px"><span style="color:#7cacf8">&lt;form</span><span style="color:#7cacf8">&gt;</span><span class="bd"><i></i><i></i><i></i></span><span style="color:#7cacf8">&lt;/form</span><span style="color:#7cacf8">&gt;</span></div>
<div style="position:absolute;left:5px;top:792.28px;width:1200px;height:22.13px;background:#3b3b3b;border-radius:6px"></div>
<div class="row" style="left:204.70px;top:792.28px"><span style="color:#7cacf8">&lt;/div</span><span style="color:#7cacf8">&gt;</span></div>
<div class="row" style="left:188.08px;top:814.41px"><span style="color:#7cacf8">&lt;/article</span><span style="color:#7cacf8">&gt;</span></div>
<div class="row" style="left:171.46px;top:836.54px"><span style="color:#7cacf8">&lt;/li</span><span style="color:#7cacf8">&gt;</span></div>
<div class="trc" style="left:158.16px;top:863.17px"></div>
<div class="row" style="left:171.46px;top:858.67px"><span style="color:#7cacf8">&lt;li</span><span style="color:#b3cbf6"> class</span><span style="color:#7cacf8">=&quot;</span><span style="color:#f0925f">col-xs-6 col-sm-4 col-md-3 col-lg-3</span><span style="color:#7cacf8">&quot;</span><span style="color:#7cacf8">&gt;</span><span class="bd"><i></i><i></i><i></i></span><span style="color:#7cacf8">&lt;/li</span><span style="color:#7cacf8">&gt;</span></div>
<div class="trc" style="left:158.16px;top:885.30px"></div>
<div class="row" style="left:171.46px;top:880.80px"><span style="color:#7cacf8">&lt;li</span><span style="color:#b3cbf6"> class</span><span style="color:#7cacf8">=&quot;</span><span style="color:#f0925f">col-xs-6 col-sm-4 col-md-3 col-lg-3</span><span style="color:#7cacf8">&quot;</span><span style="color:#7cacf8">&gt;</span><span class="bd"><i></i><i></i><i></i></span><span style="color:#7cacf8">&lt;/li</span><span style="color:#7cacf8">&gt;</span></div>
  </div>
  <div class="abs" style="left:0;top:38px;width:1197px;height:1px;background:#474747"></div>
  <div id="crumbbar">
    <div class="abs" style="left:2px;top:0;width:31px;height:31px;border:1px solid #5a5a5a;box-sizing:border-box;border-bottom:none"></div>
    <svg class="abs" style="left:13.5px;top:9.5px" width="8" height="11"><path d="M7 0.5 L0.5 5 L7 9.5z" fill="#c7c7c7"/></svg>
    <div class="crumb" style="left:53.8px;letter-spacing:0px"><span style="color:#7cacf8">div</span><span style="color:#b8cdf2">.page_inner</span></div>
<div class="crumb" style="left:187.8px;letter-spacing:0px"><span style="color:#7cacf8">div</span><span style="color:#b8cdf2">.row</span></div>
<div class="crumb" style="left:262.9px;letter-spacing:0.6px"><span style="color:#7cacf8">div</span><span style="color:#b8cdf2">.col-sm-8.col-md-9</span></div>
<div class="crumb" style="left:461.0px;letter-spacing:0.4px"><span style="color:#7cacf8">section</span><span style="color:#b8cdf2"></span></div>
<div class="crumb" style="left:537.3px;letter-spacing:0px"><span style="color:#7cacf8">div</span><span style="color:#b8cdf2"></span></div>
<div class="crumb" style="left:580.0px;letter-spacing:0px"><span style="color:#7cacf8">ol</span><span style="color:#b8cdf2">.row</span></div>
<div class="crumb" style="left:647.6px;letter-spacing:0.57px"><span style="color:#7cacf8">li</span><span style="color:#b8cdf2">.col-xs-6.col-sm-4.col-md-3.col-lg-3</span></div>
<div class="crumb" style="left:970.3px;letter-spacing:0.37px"><span style="color:#7cacf8">article</span><span style="color:#b8cdf2">.product_pod</span></div>
<div class="crumb" style="left:1145.4px;letter-spacing:0px"><span style="color:#7cacf8">h3</span><span style="color:#b8cdf2"></span></div>
    <div class="abs" style="left:1176.5px;top:0;width:30px;height:33px;background:#1d4a72"></div>
    <div class="crumb" style="left:1182px;color:#a8c7fa">a</div>
  </div>
  <!-- red outlines -->
  <div class="redpill" style="left:212.5px;top:0.5px;width:111.5px;height:36px;border-radius:18px"></div>
  <div class="redpill" style="left:200.5px;top:584px;width:984.5px;height:89.5px;border-radius:19px"></div>
  <div class="redpill" style="left:215.5px;top:693.5px;width:315.5px;height:27.5px;border-radius:14px"></div>
</div>

</body></html>
